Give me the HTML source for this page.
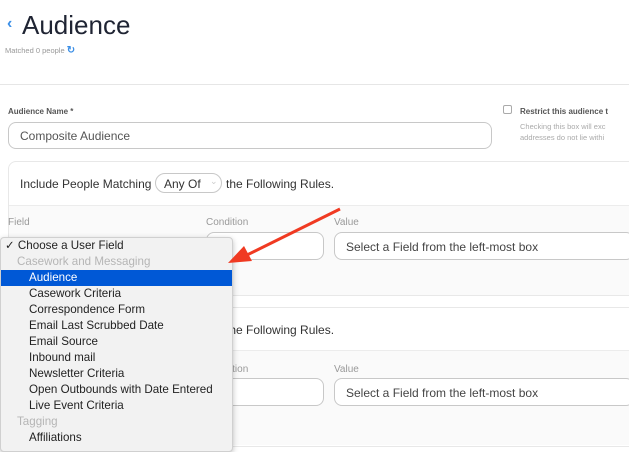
<!DOCTYPE html>
<html><head><style>
*{margin:0;padding:0;box-sizing:border-box}
body{width:629px;height:445px;overflow:hidden;background:#fff;font-family:"Liberation Sans",sans-serif;position:relative;color:#333}
.a{position:absolute}
.inp{position:absolute;border:1px solid #c8c8c8;border-radius:8px;background:#fff}
.lbl{font-size:10px;color:#999}
.dd{position:absolute;left:0;top:237px;width:233px;height:215px;background:#f2f2f2;border:1px solid #d0d0d0;border-radius:4px;box-shadow:0 2px 6px rgba(0,0,0,.25);font-size:11.6px;color:#222}
.dd div{height:16px;line-height:16px;padding-left:28px;white-space:nowrap}
.dd .g{color:#b5b5b5;padding-left:16px}
.dd .s{background:#0058d6;color:#fff}
</style></head><body>
<div class="a" style="left:7px;top:15px;color:#3a8ee6;font-size:16px;font-weight:bold">‹</div>
<div class="a" style="left:22px;top:10px;font-size:26px;color:#1f2433">Audience</div>
<div class="a" style="left:5px;top:45px;font-size:7.5px;color:#999">Matched 0 people <span style="color:#3a8ee6;font-size:10px;font-weight:bold">↻</span></div>
<div class="a" style="left:0;top:84px;width:629px;height:1px;background:#e6e6e6"></div>
<div class="a" style="left:8px;top:107px;font-size:8px;color:#555;font-weight:bold">Audience Name *</div>
<div class="inp" style="left:8px;top:122px;width:484px;height:27px"></div>
<div class="a" style="left:20px;top:129px;font-size:12px;color:#555">Composite Audience</div>
<div class="a" style="left:503px;top:105px;width:9px;height:9px;border:1px solid #aaa;border-radius:2px"></div>
<div class="a" style="left:520px;top:107px;font-size:8px;color:#555;font-weight:bold;white-space:nowrap">Restrict this audience t</div>
<div class="a" style="left:520px;top:121px;font-size:7.5px;color:#aaa;line-height:11px;white-space:nowrap">Checking this box will exc<br>addresses do not lie withi</div>

<div class="a" style="left:8px;top:161px;width:630px;height:135px;border:1px solid #e8e8e8;border-radius:8px;background:#fff"></div>
<div class="a" style="left:9px;top:205px;width:620px;height:90px;background:#fafafa;border-top:1px solid #ececec"></div>
<div class="a" style="left:20px;top:177px;font-size:12px;color:#333">Include People Matching</div>
<div class="inp" style="left:155px;top:173px;width:67px;height:20px;border-radius:10px"></div>
<div class="a" style="left:164px;top:177px;font-size:12px">Any Of</div>
<div class="a" style="left:210px;top:176px;font-size:9px;color:#ccc">⌄</div>
<div class="a" style="left:226px;top:177px;font-size:12px">the Following Rules.</div>
<div class="a lbl" style="left:8px;top:217px">Field</div>
<div class="a lbl" style="left:206px;top:217px">Condition</div>
<div class="a lbl" style="left:334px;top:217px">Value</div>
<div class="inp" style="left:206px;top:232px;width:118px;height:28px"></div>
<div class="inp" style="left:334px;top:232px;width:300px;height:28px"></div>
<div class="a" style="left:346px;top:240px;font-size:12px;color:#444">Select a Field from the left-most box</div>

<div class="a" style="left:8px;top:307px;width:630px;height:140px;border:1px solid #e8e8e8;border-radius:8px;background:#fff"></div>
<div class="a" style="left:9px;top:350px;width:620px;height:95px;background:#fafafa;border-top:1px solid #ececec"></div>
<div class="a" style="left:226px;top:323px;font-size:12px">the Following Rules.</div>
<div class="a lbl" style="left:206px;top:364px">Condition</div>
<div class="a lbl" style="left:334px;top:364px">Value</div>
<div class="inp" style="left:206px;top:378px;width:118px;height:28px"></div>
<div class="inp" style="left:334px;top:378px;width:300px;height:28px"></div>
<div class="a" style="left:346px;top:386px;font-size:12px;color:#444">Select a Field from the left-most box</div>

<div class="dd">
<div style="padding-left:4px">✓ Choose a User Field</div>
<div class="g">Casework and Messaging</div>
<div class="s">Audience</div>
<div>Casework Criteria</div>
<div>Correspondence Form</div>
<div>Email Last Scrubbed Date</div>
<div>Email Source</div>
<div>Inbound mail</div>
<div>Newsletter Criteria</div>
<div>Open Outbounds with Date Entered</div>
<div>Live Event Criteria</div>
<div class="g">Tagging</div>
<div>Affiliations</div>
</div>
<svg class="a" style="left:0;top:0" width="629" height="445">
<line x1="340" y1="209" x2="245" y2="256" stroke="#f03a22" stroke-width="3"/>
<polygon points="228,263 244,246 252,261" fill="#f03a22"/>
</svg>
</body></html>
